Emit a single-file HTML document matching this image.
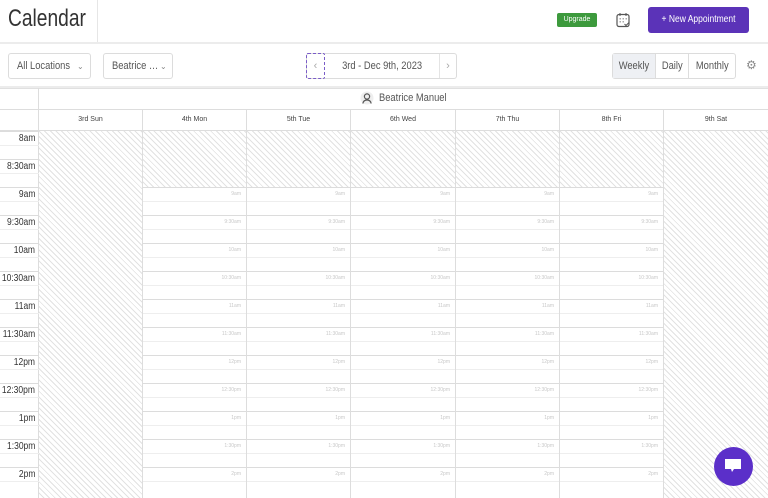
<!DOCTYPE html>
<html><head><meta charset="utf-8"><style>
*{box-sizing:border-box;margin:0;padding:0}
html,body{width:768px;height:498px;overflow:hidden}
body{background:#fff;font-family:"Liberation Sans",sans-serif;position:relative;color:#444}
.a{position:absolute;white-space:nowrap}
.box{position:absolute;border:1px solid #dcdcdc;border-radius:3px;background:#fff;font-size:11px;color:#555;display:flex;align-items:center;white-space:nowrap}
.hatch{background:repeating-linear-gradient(45deg,#fff 0 3px,#e2e2e2 3px 4px)}
.tl{position:absolute;right:733px;font-size:10px;color:#333;text-align:right;white-space:nowrap;transform:scaleX(.85);transform-origin:right}
.cl{position:absolute;font-size:5px;color:#c8c8c8;text-align:right;width:40px;white-space:nowrap}
.dh{position:absolute;top:109px;height:22px;font-size:7px;color:#444;text-align:center;line-height:22px;border-left:1px solid #ddd}
.c{display:inline-block;transform:scaleX(.85)}
</style></head><body>
<div class="a" style="left:8px;top:5px;font-size:24px;color:#333;transform:scaleX(.8);transform-origin:left">Calendar</div>
<div class="a" style="left:97px;top:0;width:1px;height:42px;background:#e6e6e6"></div>
<div class="a" style="left:0;top:42px;width:768px;height:2px;background:#ececec"></div>
<div class="a" style="left:557px;top:13px;width:40px;height:14px;background:#3d9a3d;border-radius:2px;color:#fff;font-size:7px;text-align:center;line-height:14px">Upgrade</div>
<svg class="a" style="left:615px;top:12px" width="16" height="16" viewBox="0 0 16 16"><rect x="2" y="2.5" width="12" height="12" rx="2" fill="none" stroke="#555" stroke-width="1.2"/><line x1="5" y1="1" x2="5" y2="4" stroke="#555"/><line x1="11" y1="1" x2="11" y2="4" stroke="#555"/><g fill="#aaa"><rect x="4.5" y="6" width="1.5" height="1.5"/><rect x="7.5" y="6" width="1.5" height="1.5"/><rect x="10.5" y="6" width="1.5" height="1.5"/><rect x="4.5" y="9" width="1.5" height="1.5"/><rect x="7.5" y="9" width="1.5" height="1.5"/></g><path d="M9.5 12l1.5 1.5 3-3" stroke="#555" fill="none"/></svg>
<div class="a" style="left:648px;top:7px;width:101px;height:26px;background:#5b33b8;border-radius:3px;color:#fff;font-size:10px;text-align:center;line-height:26px"><span class="c">+ New Appointment</span></div>

<div class="box" style="left:8px;top:53px;width:83px;height:26px;padding-left:8px"><span class="c" style="transform-origin:left">All Locations</span><span style="position:absolute;left:68px;font-size:8px;color:#888">&#8964;</span></div>
<div class="box" style="left:103px;top:53px;width:70px;height:26px;padding-left:8px"><span class="c" style="transform-origin:left">Beatrice …</span><span style="position:absolute;left:56px;font-size:8px;color:#888">&#8964;</span></div>
<div class="box" style="left:306px;top:53px;width:151px;height:26px"></div>
<div class="a" style="left:306px;top:53px;width:19px;height:26px;border:1px dashed #7a5cc8;border-radius:2px;color:#aaa;font-size:11px;text-align:center;line-height:24px">&#8249;</div>
<div class="a" style="left:325px;top:54px;width:114px;height:24px;font-size:11px;color:#555;text-align:center;line-height:24px"><span class="c">3rd - Dec 9th, 2023</span></div>
<div class="a" style="left:439px;top:54px;width:1px;height:24px;background:#e4e4e4"></div>
<div class="a" style="left:440px;top:54px;width:16px;height:24px;color:#aaa;font-size:11px;text-align:center;line-height:24px">&#8250;</div>

<div class="box" style="left:612px;top:53px;width:124px;height:26px"></div>
<div class="a" style="left:613px;top:54px;width:43px;height:24px;background:#eef0f4;font-size:11px;color:#555;text-align:center;line-height:24px;border-right:1px solid #ddd"><span class="c">Weekly</span></div>
<div class="a" style="left:656px;top:54px;width:33px;height:24px;font-size:11px;color:#555;text-align:center;line-height:24px;border-right:1px solid #ddd"><span class="c">Daily</span></div>
<div class="a" style="left:689px;top:54px;width:47px;height:24px;font-size:11px;color:#555;text-align:center;line-height:24px"><span class="c">Monthly</span></div>
<div class="a" style="left:746px;top:58px;font-size:12px;color:#888">&#9881;</div>

<div class="a" style="left:0;top:86px;width:768px;height:2px;background:#ececec"></div>
<div class="a" style="left:0;top:88px;width:768px;height:1px;background:#e0e0e0"></div>
<div class="a" style="left:38px;top:88px;width:1px;height:410px;background:#ddd"></div>
<div class="a" style="left:0;top:109px;width:768px;height:1px;background:#ddd"></div>
<div class="a" style="left:0;top:130px;width:768px;height:1px;background:#ddd"></div>
<svg class="a" style="left:360px;top:91px" width="14" height="14" viewBox="0 0 14 14"><circle cx="7" cy="7" r="6.5" fill="#eee"/><circle cx="7" cy="5.5" r="2.6" fill="none" stroke="#555" stroke-width="1.2"/><path d="M2.8 12.5c.5-2.5 2-3.5 4.2-3.5s3.7 1 4.2 3.5" fill="none" stroke="#555" stroke-width="1.2"/></svg>
<div class="a" style="left:379px;top:92px;font-size:11px;color:#555;transform:scaleX(.85);transform-origin:left">Beatrice Manuel</div>

<div id="g" class="a" style="left:0;top:0;width:768px;height:498px;overflow:hidden"></div>
<div class="a" style="left:714px;top:447px;width:39px;height:39px;border-radius:50%;background:#5b2fc9"></div>
<svg class="a" style="left:723px;top:457px" width="20" height="18" viewBox="0 0 20 18"><path d="M2 2h16v10h-7l-2 3-1-3H2z" fill="#fff"/></svg>
<script>
var cols=[38,142,246,350,455,559,663,768],days=["3rd Sun","4th Mon","5th Tue","6th Wed","7th Thu","8th Fri","9th Sat"];
var times=["8am","8:30am","9am","9:30am","10am","10:30am","11am","11:30am","12pm","12:30pm","1pm","1:30pm","2pm"];
var h="";
for(var i=0;i<7;i++){h+='<div class="dh" style="left:'+cols[i]+'px;width:'+(cols[i+1]-cols[i])+'px">'+days[i]+'</div>';}
for(var r=0;r<13;r++){var y=131+r*28;
 h+='<div class="a" style="left:0;top:'+y+'px;width:768px;height:1px;background:#dcdcdc"></div>';
 h+='<div class="a" style="left:0;top:'+(y+14)+'px;width:768px;height:1px;background:#eeeeee"></div>';
 h+='<div class="tl" style="top:'+(y+2)+'px">'+times[r]+'</div>';
 if(r>=2){for(var c=1;c<6;c++){h+='<div class="cl" style="left:'+(cols[c+1]-45)+'px;top:'+(y+4)+'px">'+times[r]+'</div>';}}
}
h+='<div class="a hatch" style="left:39px;top:131px;width:103px;height:367px"></div>';
h+='<div class="a hatch" style="left:664px;top:131px;width:104px;height:367px"></div>';
for(var c=1;c<6;c++){h+='<div class="a hatch" style="left:'+(cols[c]+1)+'px;top:131px;width:'+(cols[c+1]-cols[c]-1)+'px;height:56px"></div>';}
for(var i=1;i<7;i++){h+='<div class="a" style="left:'+cols[i]+'px;top:109px;width:1px;height:389px;background:#ddd"></div>';}
document.getElementById("g").innerHTML=h;
</script>
</body></html>
